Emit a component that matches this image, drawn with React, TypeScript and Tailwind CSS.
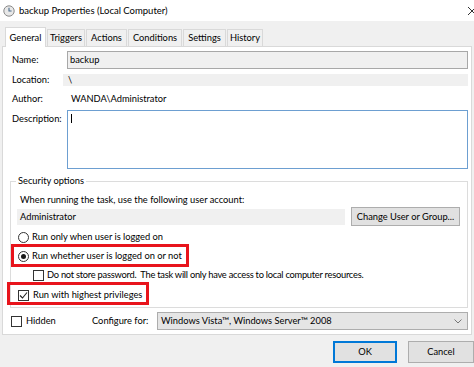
import { ReactNode } from 'react'

const tabs = [
  { label: 'General', w: 'w-[41px]' },
  { label: 'Triggers', w: 'w-[38px]' },
  { label: 'Actions', w: 'w-[41px]' },
  { label: 'Conditions', w: 'w-[54px]' },
  { label: 'Settings', w: 'w-[43px]' },
  { label: 'History', w: 'w-[36px]' },
]

function Radio({ checked }: { checked?: boolean }) {
  return (
    <span className="flex h-[11px] w-[11px] shrink-0 items-center justify-center rounded-full border border-[#333] bg-white">
      {checked && <span className="h-[5px] w-[5px] rounded-full bg-[#1a1a1a]" />}
    </span>
  )
}

function Check({ checked }: { checked?: boolean }) {
  return (
    <span className="flex h-[11px] w-[11px] shrink-0 items-center justify-center border border-[#333] bg-white">
      {checked && (
        <svg width="9" height="9" viewBox="0 0 9 9">
          <path d="M1 4.5 L3.5 7 L8 1.5" fill="none" stroke="#222" strokeWidth="1.1" />
        </svg>
      )}
    </span>
  )
}

function Label({ children }: { children: ReactNode }) {
  return <span className="w-[57px] shrink-0 pl-[2px]">{children}</span>
}

export default function App() {
  return (
    <div
      className="relative h-[367px] w-[474px] overflow-hidden bg-[#f0f0f0] text-[9.3px] leading-none text-black"
      style={{ fontFamily: 'Lato, "Noto Sans", sans-serif' }}
    >
      {/* Title bar */}
      <div className="flex h-[21px] items-center bg-white pl-[3px]">
        <svg width="12" height="12" viewBox="0 0 12 12" className="mr-[4px]">
          <circle cx="6" cy="6" r="5.2" fill="#e8e8e8" stroke="#8a8a8a" strokeWidth="1" />
          <path d="M6 2.8 V6 H8.6" fill="none" stroke="#4a6b8a" strokeWidth="1.1" />
        </svg>
        <span className="text-[9.5px]">backup Properties (Local Computer)</span>
        <svg width="10" height="10" viewBox="0 0 10 10" className="ml-auto mr-[-3px]">
          <path d="M1 1 L9 9 M9 1 L1 9" stroke="#333" strokeWidth="1" />
        </svg>
      </div>

      {/* Tabs */}
      <div className="flex items-end pl-[5px] pt-[6px]">
        {tabs.map((t, i) => (
          <div
            key={t.label}
            className={
              i === 0
                ? `${t.w} z-10 mb-[-1px] flex h-[20px] items-center justify-center border border-b-0 border-[#d9d9d9] bg-white`
                : `${t.w} ml-[1px] flex h-[17px] items-center justify-center border border-b-0 border-[#d9d9d9] bg-[#f0f0f0]`
            }
          >
            {t.label}
          </div>
        ))}
      </div>

      {/* Panel */}
      <div className="mx-[2px] flex flex-col border border-[#d9d9d9] bg-white pb-[4px] pl-[7px] pr-[3px] pt-[4px]">
        <div className="flex h-[18px] items-center">
          <Label>Name:</Label>
          <div className="flex h-full flex-1 items-center border border-[#a8a8a8] bg-[#f0f0f0] pl-[2px]">backup</div>
        </div>
        <div className="mt-[5px] flex h-[12px] items-center">
          <span className="w-[53px] shrink-0 pl-[2px]">Location:</span>
          <div className="flex h-full flex-1 items-center bg-[#f0f0f0] pl-[5px]">\</div>
        </div>
        <div className="mt-[6px] flex h-[14px] items-center">
          <span className="w-[61px] shrink-0 pl-[2px]">Author:</span>
          <span>WANDA\Administrator</span>
        </div>
        <div className="mt-[4px] flex h-[59px]">
          <span className="w-[57px] shrink-0 pl-[2px] pt-[4px]">Description:</span>
          <div className="flex-1 border border-[#6d9fd1] bg-white pl-[3px] pt-[3px]">
            <span className="block h-[9px] w-[1px] bg-black" />
          </div>
        </div>

        {/* Security options */}
        <div className="relative mt-[12px] flex h-[127px] flex-col border border-[#dcdcdc] pl-[6px] pr-[7px] pt-[11px]">
          <span className="absolute left-[5px] top-[-6px] bg-white px-[2px]">Security options</span>
          <div className="flex h-[14px] items-center pl-[3px]">
            When running the task, use the following user account:
          </div>
          <div className="flex h-[19px] items-center">
            <div className="flex h-[16px] flex-1 items-center bg-[#f0f0f0] pl-[3px]">Administrator</div>
            <div className="ml-[6px] flex h-[19px] w-[109px] items-center justify-center border border-[#adadad] bg-[#e1e1e1]">
              Change User or Group...
            </div>
          </div>
          <div className="mt-[4px] flex h-[14px] items-center gap-[3px] pl-[1px]">
            <Radio />
            <span>Run only when user is logged on</span>
          </div>
          <div className="mt-[5px] flex h-[14px] items-center gap-[3px] pl-[1px]">
            <Radio checked />
            <span>Run whether user is logged on or not</span>
          </div>
          <div className="mt-[5px] flex h-[14px] items-center gap-[3px] pl-[16px]">
            <Check />
            <span className="tracking-[-0.25px]">
              Do not store password.&nbsp; The task will only have access to local computer resources.
            </span>
          </div>
          <div className="mt-[6px] flex h-[14px] items-center gap-[4px] pl-[1px]">
            <Check checked />
            <span>Run with highest privileges</span>
          </div>
        </div>

        {/* Hidden / Configure for */}
        <div className="mt-[4px] flex h-[18px] items-center">
          <div className="flex w-[82px] items-center gap-[4px] pl-[1px]">
            <Check />
            <span>Hidden</span>
          </div>
          <span className="w-[65px]">Configure for:</span>
          <div className="flex h-full flex-1 items-center border border-[#adadad] bg-[#e5e5e5] pl-[3px] pr-[5px]">
            <span>Windows Vista™, Windows Server™ 2008</span>
            <svg width="8" height="5" viewBox="0 0 8 5" className="ml-auto">
              <path d="M0.5 0.5 L4 4 L7.5 0.5" fill="none" stroke="#777" strokeWidth="1" />
            </svg>
          </div>
        </div>
      </div>

      {/* Dialog buttons */}
      <div className="mt-[6px] flex justify-end gap-[11px]">
        <div className="flex h-[22px] w-[64px] items-center justify-center border-2 border-[#0078d7] bg-[#e1e1e1]">OK</div>
        <div className="flex h-[22px] w-[66px] items-center justify-center border border-[#adadad] bg-[#e1e1e1]">Cancel</div>
      </div>

      {/* Red annotation boxes */}
      <div className="pointer-events-none absolute left-[11px] top-[244px] h-[23px] w-[178px] border-[3px] border-[#e8141c]" />
      <div className="pointer-events-none absolute left-[7px] top-[282px] h-[23px] w-[142px] border-[3px] border-[#e8141c]" />
    </div>
  )
}
